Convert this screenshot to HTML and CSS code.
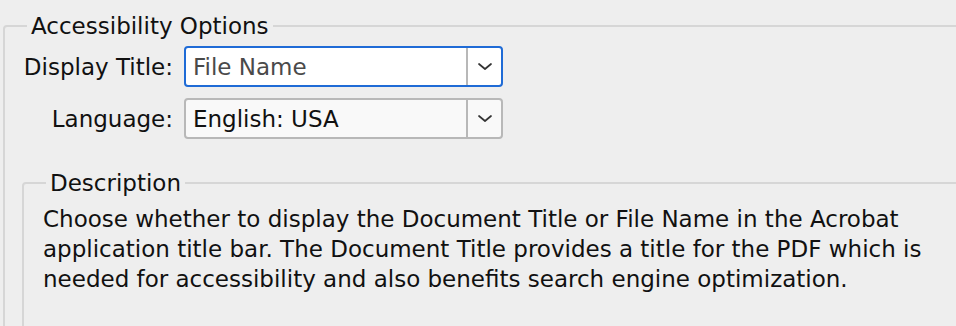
FILE: index.html
```html
<!DOCTYPE html>
<html lang="en">
<head>
    <meta charset="UTF-8">
    <meta name="viewport" content="width=device-width, initial-scale=1.0">
    <title>Accessibility Options</title>
    <link rel="stylesheet" href="styles.css">
</head>
<body>
    <fieldset class="group">
        <legend class="group-title">Accessibility Options</legend>

        <div class="form-grid">
            <label class="field-label" for="displayTitle">Display Title:</label>
            <div class="combo combo-focus" id="displayTitle">
                <span class="combo-value combo-muted">File Name</span>
                <span class="combo-arrow">
                    <svg width="16" height="9" viewBox="0 0 16 9"><path d="M2 2 L8 7 L14 2" fill="none" stroke="#333" stroke-width="1.7" stroke-linecap="round" stroke-linejoin="round"/></svg>
                </span>
            </div>

            <label class="field-label" for="language">Language:</label>
            <div class="combo" id="language">
                <span class="combo-value">English: USA</span>
                <span class="combo-arrow">
                    <svg width="16" height="9" viewBox="0 0 16 9"><path d="M2 2 L8 7 L14 2" fill="none" stroke="#333" stroke-width="1.7" stroke-linecap="round" stroke-linejoin="round"/></svg>
                </span>
            </div>
        </div>

        <fieldset class="group inner">
            <legend class="group-title">Description</legend>
            <p class="description">Choose whether to display the Document Title or File Name in the Acrobat application title bar. The Document Title provides a title for the PDF which is needed for accessibility and also benefits search engine optimization.</p>
        </fieldset>
    </fieldset>
</body>
</html>
```

FILE: styles.css
```css
body {
    margin: 0;
    background-color: #eeeeee;
    color: #111;
    font-family: "DejaVu Sans", Verdana, sans-serif;
    font-size: 23px;
    line-height: 28px;
    overflow: hidden;
    height: 326px;
}
.group {
    margin: 12px 0 0 3px;
    padding: 0;
    width: 1000px;
    border: 2px solid #d6d6d6;
    border-radius: 4px;
    min-width: 0;
}
.group-title {
    margin-left: 22px;
    padding: 0 4px;
    line-height: 28px;
}
.form-grid {
    display: grid;
    grid-template-columns: 168px 319px;
    column-gap: 11px;
    row-gap: 11px;
    margin-top: 6px;
}
.field-label {
    text-align: right;
    align-self: center;
}
.combo {
    display: flex;
    height: 41px;
    box-sizing: border-box;
    border: 2px solid #b8b8b8;
    border-radius: 4px;
    background-color: #f9f9f9;
}
.combo-focus {
    border-color: #1f6bd6;
    background-color: #fff;
}
.combo-value {
    flex: 1;
    padding-left: 7px;
    align-self: center;
}
.combo-muted {
    color: #4a4a4a;
}
.combo-arrow {
    width: 33px;
    border-left: 2px solid #b8b8b8;
    display: flex;
    align-items: center;
    justify-content: center;
}
.inner {
    margin: 30px 0 0 17px;
    height: 400px;
}
.description {
    margin: 0;
    padding: 7px 0 0 19px;
    line-height: 30px;
    width: 895px;
}
```
